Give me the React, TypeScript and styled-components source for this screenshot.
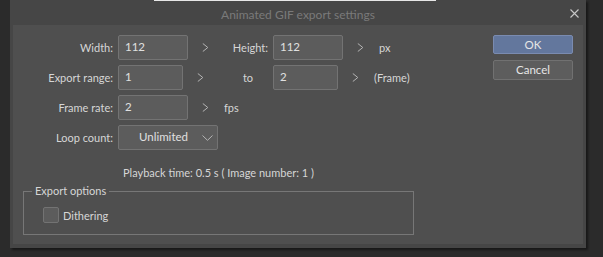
import React from 'react';
import styled, { createGlobalStyle } from 'styled-components';

const GlobalStyle = createGlobalStyle`
  html, body {
    margin: 0;
    padding: 0;
    background: #2b2b2b;
  }
  body {
    font-family: Lato, "Liberation Sans", Arial, sans-serif;
    font-size: 11px;
    color: #d6d6d6;
  }
`;

const Page = styled.div`
  position: relative;
  width: 603px;
  height: 257px;
  overflow: hidden;
`;

// sliver of the window sitting behind the dialog
const BehindStrip = styled.div`
  position: absolute;
  top: 0;
  left: 154px;
  width: 282px;
  height: 1px;
  background: #e6e6e6;
`;

const Dialog = styled.div`
  margin-left: 10px;
  width: 576px;
  height: 248px;
  background: #464646;
  box-shadow: 2px 2px 2px rgba(0, 0, 0, 0.45);
  display: flex;
  flex-direction: column;
`;

const TitleBar = styled.div`
  height: 25px;
  display: grid;
  grid-template-columns: 1fr auto 1fr;
  align-items: center;
  color: #7a7a7a;
  font-size: 12px;
`;

const Title = styled.div`
  grid-column: 2;
  padding-top: 4px;
`;

const CloseButton = styled.div`
  grid-column: 3;
  justify-self: end;
  margin-right: 7px;
  margin-top: 1px;
  width: 9px;
  height: 9px;
  display: flex;
`;

const Panel = styled.div`
  margin: 0 3px;
  height: 219px;
  background: #4f4f4f;
  display: flex;
`;

const Form = styled.div`
  flex: 1;
  padding-top: 10px;
  display: flex;
  flex-direction: column;
`;

const Row = styled.div`
  display: flex;
  align-items: center;
  height: 25px;
  margin-bottom: 5px;
`;

const Label = styled.div`
  width: 100px;
  text-align: right;
  margin-right: 5px;
  white-space: nowrap;
`;

const FieldCell = styled.div`
  width: 104px;
  display: flex;
  align-items: center;
`;

const SubLabel = styled.div<{ $center?: boolean }>`
  width: 46px;
  margin-right: 5px;
  text-align: ${(p) => (p.$center ? 'center' : 'right')};
  padding-left: ${(p) => (p.$center ? '6px' : '0')};
  box-sizing: border-box;
  white-space: nowrap;
`;

const Input = styled.div<{ $w: number }>`
  width: ${(p) => p.$w}px;
  height: 25px;
  box-sizing: border-box;
  background: #5c5c5c;
  border: 1px solid #737373;
  border-radius: 2px;
  padding-left: 6px;
  display: flex;
  align-items: center;
  color: #e0e0e0;
  font-size: 11.5px;
  padding-bottom: 2px;
`;

const Chevron = styled.svg`
  margin-left: 14px;
  width: 7px;
  height: 9px;
  flex-shrink: 0;
`;

const Unit = styled.div`
  margin-left: 15px;
  white-space: nowrap;
`;

const Select = styled.div`
  width: 100px;
  height: 25px;
  box-sizing: border-box;
  background: #5c5c5c;
  border: 1px solid #737373;
  border-radius: 2px;
  display: flex;
  align-items: center;
  color: #e0e0e0;
  font-size: 11.5px;
  padding-bottom: 2px;
`;

const SelectText = styled.div`
  flex: 1;
  text-align: center;
  padding-left: 6px;
`;

const SelectArrow = styled.svg`
  width: 11px;
  height: 6px;
  margin-right: 4px;
  margin-top: 2px;
`;

const Playback = styled.div`
  margin-top: 10px;
  margin-left: 110px;
  height: 16px;
  line-height: 16px;
`;

const Group = styled.fieldset`
  margin: 2px 0 0 10px;
  width: 391px;
  box-sizing: border-box;
  height: 52px;
  border: 1px solid #777777;
  padding: 0 0 0 8px;
`;

const Legend = styled.legend`
  padding: 0 3px;
  line-height: 16px;
`;

const CheckRow = styled.div`
  display: flex;
  align-items: center;
  margin-top: 8px;
  margin-left: 11px;
`;

const Checkbox = styled.div`
  width: 16px;
  height: 16px;
  box-sizing: border-box;
  background: #5c5c5c;
  border: 1px solid #737373;
  border-radius: 2px;
  margin-right: 4px;
`;

const Buttons = styled.div`
  padding: 10px 10px 0 0;
  display: flex;
  flex-direction: column;
  gap: 6px;
`;

const Button = styled.div<{ $primary?: boolean }>`
  width: 80px;
  height: ${(p) => (p.$primary ? 19 : 20)}px;
  box-sizing: border-box;
  border-radius: 2px;
  background: ${(p) => (p.$primary ? '#63779d' : '#5d5d5d')};
  border: 1px solid ${(p) => (p.$primary ? '#7a8bb0' : '#717171')};
  color: #e6e6e6;
  font-size: 11.5px;
  display: flex;
  align-items: center;
  justify-content: center;
  padding-bottom: 1px;
`;

const Arrow = () => (
  <Chevron viewBox="0 0 7 9">
    <polyline points="0.8,0.5 5.8,4.5 0.8,8.5" fill="none" stroke="#b4b4b4" strokeWidth="1" />
  </Chevron>
);

export default function App() {
  return (
    <Page>
      <GlobalStyle />
      <BehindStrip />
      <Dialog>
        <TitleBar>
          <Title>Animated GIF export settings</Title>
          <CloseButton>
            <svg viewBox="0 0 9 9" width="9" height="9">
              <path d="M0.5 0.5L8.5 8.5M8.5 0.5L0.5 8.5" stroke="#c8c8c8" strokeWidth="1.1" />
            </svg>
          </CloseButton>
        </TitleBar>
        <Panel>
          <Form>
            <Row>
              <Label>Width:</Label>
              <FieldCell>
                <Input $w={70}>112</Input>
                <Arrow />
              </FieldCell>
              <SubLabel>Height:</SubLabel>
              <Input $w={70}>112</Input>
              <Arrow />
              <Unit>px</Unit>
            </Row>
            <Row>
              <Label>Export range:</Label>
              <FieldCell>
                <Input $w={65}>1</Input>
                <Arrow />
              </FieldCell>
              <SubLabel $center>to</SubLabel>
              <Input $w={65}>2</Input>
              <Arrow />
              <Unit>(Frame)</Unit>
            </Row>
            <Row>
              <Label>Frame rate:</Label>
              <Input $w={70}>2</Input>
              <Arrow />
              <Unit>fps</Unit>
            </Row>
            <Row>
              <Label>Loop count:</Label>
              <Select>
                <SelectText>Unlimited</SelectText>
                <SelectArrow viewBox="0 0 11 6">
                  <polyline points="0.5,0.5 5.5,5.3 10.5,0.5" fill="none" stroke="#b4b4b4" strokeWidth="1" />
                </SelectArrow>
              </Select>
            </Row>
            <Playback>Playback time: 0.5 s ( Image number: 1 )</Playback>
            <Group>
              <Legend>Export options</Legend>
              <CheckRow>
                <Checkbox />
                Dithering
              </CheckRow>
            </Group>
          </Form>
          <Buttons>
            <Button $primary>OK</Button>
            <Button>Cancel</Button>
          </Buttons>
        </Panel>
      </Dialog>
    </Page>
  );
}
